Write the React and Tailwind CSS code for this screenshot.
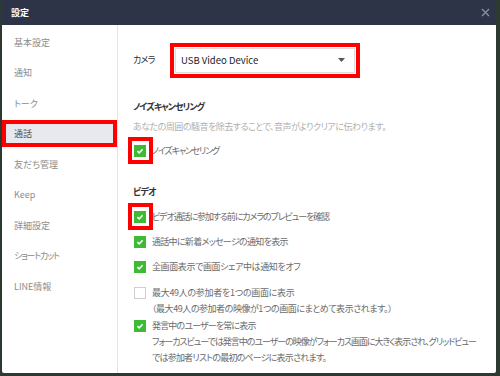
import React from 'react';

const MENU = [
  { label: '基本設定' },
  { label: '通知' },
  { label: 'トーク' },
  { label: '通話', active: true },
  { label: '友だち管理' },
  { label: 'Keep' },
  { label: '詳細設定' },
  { label: 'ショートカット', cls: 'tracking-[-1.2px]' },
  { label: 'LINE情報' },
];

// green check square used by the settings rows
function Check({ on }) {
  if (!on) return <span className="block w-3 h-3 shrink-0 border border-[#cfcfcf] bg-white" />;
  return (
    <span className="flex w-3 h-3 shrink-0 items-center justify-center bg-[#3dbb35]">
      <svg width="8" height="8" viewBox="0 0 8 8">
        <path d="M1.4 4.1 L3.2 5.9 L6.6 2.2" stroke="#fff" strokeWidth="1.5" fill="none" />
      </svg>
    </span>
  );
}

// red annotation frame drawn over an element
function Mark({ className }) {
  return <span className={`pointer-events-none absolute border-4 border-[#ff0000] ${className}`} />;
}

function Row({ on, marked, className = '', children }) {
  return (
    <div className={`flex gap-[6px] leading-[16px] ${className}`}>
      <span className="relative ml-[1px] mt-[2px] h-3">
        <Check on={on} />
        {marked && <Mark className="-left-[6px] -right-[7px] -top-[8px] -bottom-[7px]" />}
      </span>
      <div className="whitespace-nowrap text-[#6b6b6b]">{children}</div>
    </div>
  );
}

export default function App() {
  return (
    <div
      className="w-[500px] h-[376px] bg-[#2c3a31] pl-[2px] pr-[4px] pb-[3px] overflow-hidden [font-feature-settings:'palt']"
      style={{ fontFamily: '"Noto Sans CJK JP", "Noto Sans", sans-serif' }}
    >
      <div className="flex h-full flex-col overflow-hidden rounded-b-[2px] bg-white">
        {/* title bar */}
        <div className="flex h-[25px] shrink-0 items-center justify-between bg-[#2d3447] pl-[9px] pr-[6px]">
          <span className="text-[9px] font-bold text-white">設定</span>
          <svg width="9" height="9" viewBox="0 0 9 9">
            <path d="M1 1 L8 8 M8 1 L1 8" stroke="#8b909c" strokeWidth="1.3" />
          </svg>
        </div>

        <div className="flex flex-1">
          {/* sidebar */}
          <div className="w-[116px] shrink-0 border-r border-[#e4e4e4] pt-[2px]">
            {MENU.map((m) => (
              <div key={m.label} className="relative flex h-[30.5px] items-center pl-[12px] text-[9px] text-[#8c8c8c]">
                {m.active && (
                  <span className="absolute left-0 right-0 top-[1px] bottom-[2px] border-4 border-[#ff0000] bg-[#e7e9ef]" />
                )}
                <span className={`relative ${m.active ? 'text-[#555]' : ''} ${m.cls || ''}`}>{m.label}</span>
              </div>
            ))}
          </div>

          {/* main */}
          <div className="flex-1 pl-[15px] pt-[22px] text-[9px]">
            <div className="flex h-[26px] items-center">
              <span className="w-[42px] tracking-[-0.8px] text-[#333]">カメラ</span>
              <div className="relative h-[25px] w-[180px]">
                <Mark className="-inset-[5px]" />
                <div className="flex h-full items-center justify-between border border-[#dedede] bg-white pl-[5px] pr-[9px] text-[9.5px] text-[#222] shadow-[0_1px_2px_rgba(0,0,0,0.06)]">
                  <span>USB Video Device</span>
                  <svg width="7" height="4" viewBox="0 0 7 4">
                    <path d="M0 0 L7 0 L3.5 4 Z" fill="#555" />
                  </svg>
                </div>
              </div>
            </div>

            <div className="mt-[27px] font-bold leading-[14px] tracking-[-1px] text-[#333]">ノイズキャンセリング</div>
            <div className="mt-[6px] whitespace-nowrap leading-[14px] tracking-[-0.5px] text-[#b0b0b0]">
              あなたの周囲の騒音を除去することで、音声がよりクリアに伝わります。
            </div>
            <Row on marked className="mt-[9px]">
              <div className="tracking-[-1.2px]">ノイズキャンセリング</div>
            </Row>

            <div className="mt-[26px] font-bold leading-[14px] tracking-[-0.8px] text-[#333]">ビデオ</div>
            <Row on marked className="mt-[10px]">
              <div className="tracking-[-1.1px]">ビデオ通話に参加する前にカメラのプレビューを確認</div>
            </Row>
            <Row on className="mt-[9px]">
              <div className="tracking-[-0.7px]">通話中に新着メッセージの通知を表示</div>
            </Row>
            <Row on className="mt-[9px]">
              <div className="tracking-[-0.4px]">全画面表示で画面シェア中は通知をオフ</div>
            </Row>
            <Row className="mt-[10px]">
              <div className="tracking-[-0.3px]">最大49人の参加者を1つの画面に表示</div>
              <div className="tracking-[-0.45px]">（最大49人の参加者の映像が1つの画面にまとめて表示されます。）</div>
            </Row>
            <Row on className="mt-[1px]">
              <div className="tracking-[-0.85px]">発言中のユーザーを常に表示</div>
              <div className="tracking-[-1.05px]">
                フォーカスビューでは発言中のユーザーの映像がフォーカス画面に大きく表示され、グリッドビュー
              </div>
              <div className="tracking-[-0.8px]">では参加者リストの最初のページに表示されます。</div>
            </Row>
          </div>
        </div>
      </div>
    </div>
  );
}
